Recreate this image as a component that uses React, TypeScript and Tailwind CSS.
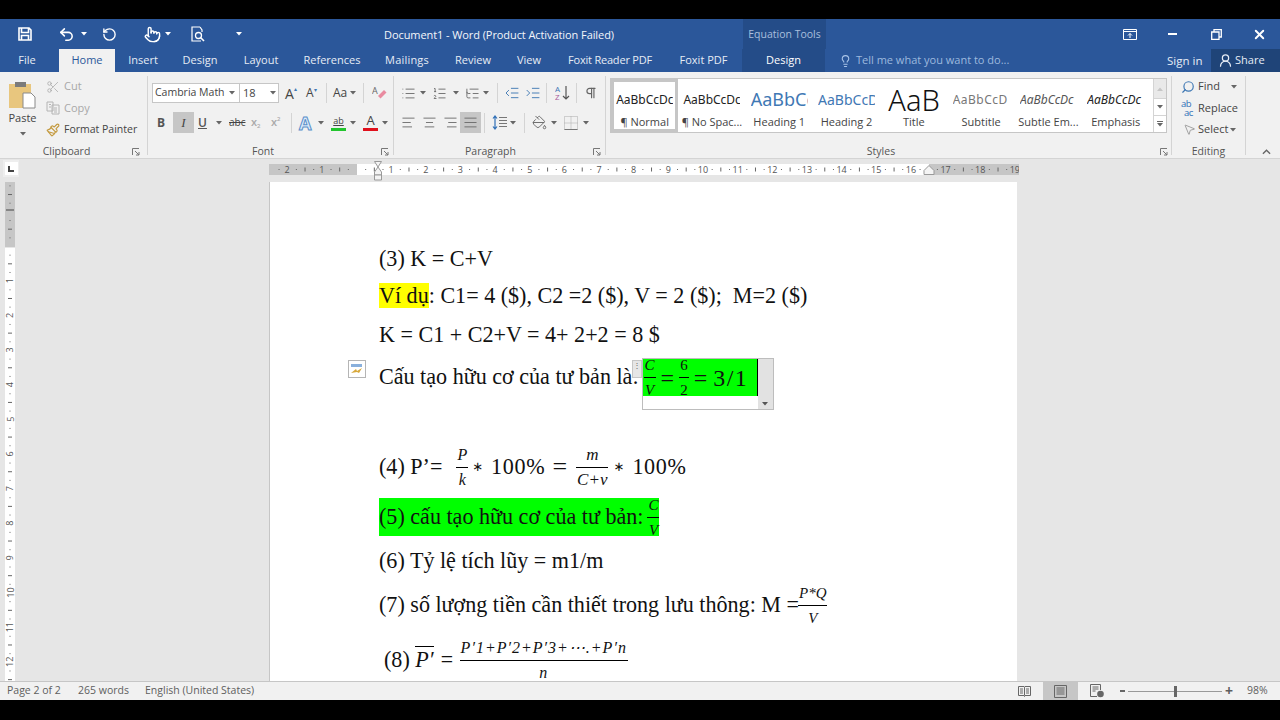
import {
  AlignCenter,
  AlignJustify,
  AlignLeft,
  AlignRight,
  IndentDecrease,
  IndentIncrease,
  Lightbulb,
  List,
  ListOrdered,
  ListTree,
  MousePointer2,
  Paintbrush,
  PaintBucket,
  Pilcrow,
  Pointer,
  RotateCw,
  Scissors,
  Search,
  Undo2,
  UserRound,
  X,
} from 'lucide-react';

const Caret = ({ className = '' }: { className?: string }) => (
  <svg viewBox="0 0 6 4" className={`w-[6px] h-[4px] shrink-0 ${className}`}>
    <path d="M0 0h6L3 3.5z" fill="currentColor" />
  </svg>
);

const Launcher = () => (
  <svg viewBox="0 0 8 8" className="w-[8px] h-[8px] text-[#777]">
    <path d="M.5 7V.5H7M3 3l4 4M4 7h3V4" fill="none" stroke="currentColor" />
  </svg>
);

const SaveIcon = () => (
  <svg viewBox="0 0 14 14" className="w-[14px] h-[14px] text-white">
    <path d="M1 1h10l2 2v10H1zM3.5 1.5v4h7v-4M3.5 13V8.5h7V13" fill="none" stroke="currentColor" strokeWidth="1.6" />
  </svg>
);

const PreviewIcon = () => (
  <svg viewBox="0 0 15 16" className="w-[15px] h-[16px] text-white">
    <path d="M10 1H2v14h9M10 1l2 3v2" fill="none" stroke="currentColor" strokeWidth="1.2" />
    <circle cx="8.5" cy="9.5" r="3" fill="none" stroke="currentColor" strokeWidth="1.3" />
    <path d="M10.5 11.5l3.5 3.5" stroke="currentColor" strokeWidth="1.6" />
  </svg>
);

const PasteIcon = () => (
  <svg viewBox="0 0 27 28" className="w-[27px] h-[28px]">
    <rect x="0" y="3" width="22" height="24" fill="#e8c67e" />
    <rect x="6" y="1" width="11" height="5" fill="#7b7b7b" />
    <path d="M14 12h8l4 4v11H14z" fill="#fff" stroke="#8a8a8a" />
  </svg>
);

const CopyIcon = () => (
  <svg viewBox="0 0 14 14" className="w-[14px] h-[14px] text-[#b4b4b4]">
    <path d="M1 1h6v9H1zM6 4h7v9H6zM3 3.5h2M3 6h2M8 7h3M8 9h3M8 11h3" fill="#f1f1f1" stroke="currentColor" />
  </svg>
);

const EraserIcon = () => (
  <svg viewBox="0 0 15 14" className="w-[15px] h-[14px]">
    <path d="M6 10l6-6 2.5 2.5-6 6z" fill="#e98ba0" />
    <text x="0" y="8" fontSize="9" fill="#666" fontFamily="Open Sans">A</text>
  </svg>
);

const ColorLetter = ({ bar, label }: { bar: string; label: string }) => (
  <span className="relative w-[15px] h-[17px] flex flex-col items-center">
    <span className={`leading-[13px] text-[#444] ${label === 'A' ? 'text-[13px]' : 'text-[9px] underline'}`}>{label}</span>
    <span className={`mt-auto w-[15px] h-[3px] ${bar}`} />
  </span>
);

const SortIcon = () => (
  <svg viewBox="0 0 16 16" className="w-[16px] h-[16px]">
    <text x="0" y="7" fontSize="8" fill="#3f74b5" fontFamily="Open Sans">A</text>
    <text x="0" y="15" fontSize="8" fill="#a85a9a" fontFamily="Open Sans">Z</text>
    <path d="M11 1v13M8 11l3 3 3-3" fill="none" stroke="#555" strokeWidth="1.2" />
  </svg>
);

const SpacingIcon = () => (
  <svg viewBox="0 0 15 15" className="w-[15px] h-[15px]">
    <path d="M3 1v13M1 3.500l2-2.500 2 2.500M1 11.500l2 2.500 2-2.500" fill="none" stroke="#2f6fb7" strokeWidth="1.2" />
    <path d="M7 2.500h8M7 5.500h8M7 8.500h8M7 11.500h8" stroke="#777" />
  </svg>
);

const BorderIcon = () => (
  <svg viewBox="0 0 14 14" className="w-[14px] h-[14px]">
    <path d="M.5.5h13v13H.5zM7 .5v13M.5 7h13" fill="none" stroke="#aaa" strokeDasharray="1 1" />
    <path d="M.5 13.500h13" stroke="#777" />
  </svg>
);

const ReplaceIcon = () => (
  <span className="w-[15px] h-[18px] flex flex-col text-[9.500px] leading-[9px] tracking-[-0.5px]">
    <span className="text-[#2f6fb7]">ab</span>
    <span className="text-[#2f6fb7] pl-[3px]">ac</span>
  </span>
);

const RestoreRibbon = () => (
  <svg viewBox="0 0 14 11" className="w-[14px] h-[11px] text-white">
    <path d="M.5.5h13v10H.5zM.5 2.500h13M7 9V4.500M5 6.500l2-2 2 2" fill="none" stroke="currentColor" />
  </svg>
);

const RestoreWin = () => (
  <svg viewBox="0 0 11 11" className="w-[11px] h-[11px] text-white">
    <path d="M3 2.500V.7h7.300V8H8.500M.7 3h7.300v7.300H.7z" fill="none" stroke="currentColor" strokeWidth="1.3" />
  </svg>
);

const ReadIcon = () => (
  <svg viewBox="0 0 13 13" className="w-[13px] h-[13px] text-[#666]">
    <path d="M.5 1.500h5.500l.5 1 .5-1h5.500v9H7l-.5 1-.5-1H.5zM6.500 2.500v8M2 4h3M2 6h3M2 8h3M8 4h3M8 6h3M8 8h3" fill="none" stroke="currentColor" />
  </svg>
);

const PrintIcon = () => (
  <svg viewBox="0 0 13 13" className="w-[13px] h-[13px] text-[#666]">
    <path d="M.5.5h12v12H.5zM2.500 3h8M2.500 5h8M2.500 7h8M2.500 9h8" fill="none" stroke="currentColor" />
  </svg>
);

const WebIcon = () => (
  <svg viewBox="0 0 14 14" className="w-[14px] h-[14px] text-[#666]">
    <path d="M7 12.500H.5V.5h10V6M2.500 3h6M2.500 5h6M2.500 7h3" fill="none" stroke="currentColor" />
    <circle cx="10.500" cy="10" r="3.300" fill="#666" />
  </svg>
);

const EquationHint = () => (
  <svg viewBox="0 0 18 18" className="w-[18px] h-[18px]">
    <rect x=".5" y=".5" width="17" height="17" fill="#fff" stroke="#b5b5b5" />
    <rect x="3" y="4" width="11" height="3" fill="#8ab0dc" />
    <path d="M3 13l5-4 1 2 5-3-3 5-2-1z" fill="#d8a83a" />
  </svg>
);

const styleItems = [
  { sample: 'AaBbCcDc', name: '¶ Normal', cls: 'text-[12px] text-[#222]' },
  { sample: 'AaBbCcDc', name: '¶ No Spac...', cls: 'text-[12px] text-[#222]' },
  { sample: 'AaBbCc', name: 'Heading 1', cls: 'text-[18px] text-[#3f78b4]' },
  { sample: 'AaBbCcD', name: 'Heading 2', cls: 'text-[14px] text-[#3f78b4]' },
  { sample: 'AaB', name: 'Title', cls: 'text-[29px] text-[#111] font-light' },
  { sample: 'AaBbCcD', name: 'Subtitle', cls: 'text-[12px] text-[#777] tracking-[0.5px]' },
  { sample: 'AaBbCcDc', name: 'Subtle Em...', cls: 'text-[12px] text-[#555] italic' },
  { sample: 'AaBbCcDc', name: 'Emphasis', cls: 'text-[12px] text-[#222] italic' },
];

const HRuler = () => {
  const nums = Array.from({ length: 19 }, (_, i) => i + 1);
  const ticks = Array.from({ length: 90 }, (_, i) => i - 12);
  return (
    <svg viewBox="0 0 750 11" className="w-[750px] h-[11px] ml-[250px] mt-[5px] shrink-0">
      <rect width="88" height="11" fill="#c6c6c6" />
      <rect x="88" width="572" height="11" fill="#fff" />
      <rect x="660" width="90" height="11" fill="#c6c6c6" />
      {ticks.map((t) => {
        const x = 87.5 + t * 8.6625;
        if (t % 4 === 0 || x < 2 || x > 748) return null;
        return t % 2 === 0 ? (
          <rect key={t} x={x} y="3.500" width="1" height="4" fill="#666" />
        ) : (
          <rect key={t} x={x} y="5" width="1" height="1" fill="#666" />
        );
      })}
      {nums.map((n) => (
        <text key={n} x={87.5 + n * 34.65} y="9" fontSize="9" fill="#555" textAnchor="middle" fontFamily="Open Sans">
          {n}
        </text>
      ))}
      {[1, 2].map((n) => (
        <text key={n} x={87.5 - n * 34.65} y="9" fontSize="9" fill="#555" textAnchor="middle" fontFamily="Open Sans">
          {n}
        </text>
      ))}
      <path d="M655 10.500v-4l5-5 5 5v4z" fill="#f4f4f4" stroke="#999" />
    </svg>
  );
};

const VRuler = () => {
  const nums = Array.from({ length: 12 }, (_, i) => i + 1);
  const ticks = Array.from({ length: 58 }, (_, i) => i - 7);
  return (
    <svg viewBox="0 0 10 499" className="w-[10px] h-[499px] ml-[5px] shrink-0">
      <rect width="10" height="65" fill="#c6c6c6" />
      <rect y="66" width="10" height="433" fill="#fff" />
      {ticks.map((t) => {
        const y = 64 + t * 8.6625;
        if (t % 4 === 0) return null;
        return t % 2 === 0 ? (
          <rect key={t} x="3" y={y} width="4" height="1" fill="#666" />
        ) : (
          <rect key={t} x="4.500" y={y} width="1" height="1" fill="#666" />
        );
      })}
      {nums.map((n) => (
        <text
          key={n}
          x="5"
          y={64 + n * 34.65}
          fontSize="9"
          fill="#555"
          textAnchor="middle"
          dominantBaseline="central"
          fontFamily="Open Sans"
          transform={`rotate(-90 5 ${64 + n * 34.65})`}
        >
          {n}
        </text>
      ))}
      <path d="M1 28h8" stroke="#444" />
    </svg>
  );
};

const Frac = ({ top, bottom, className = '' }: { top: string; bottom: string; className?: string }) => (
  <span className={`inline-flex flex-col items-center italic leading-[24px] ${className}`}>
    <span className="px-px">{top}</span>
    <span className="self-stretch h-px bg-black" />
    <span className="px-px">{bottom}</span>
  </span>
);

const MathStar = ({ className = '' }: { className?: string }) => (
  <span className={`font-['DejaVu_Sans'] text-[13px] ${className}`}>∗</span>
);

export default function App() {
  return (
    <div className="w-[1280px] h-[720px] bg-black flex flex-col overflow-hidden font-['Open_Sans',sans-serif] text-[11px]">
      <div className="h-[19px] shrink-0" />

      {/* title bar */}
      <div className="h-[30px] shrink-0 bg-[#2b579a] flex items-center text-white">
        <div className="ml-[18px] w-[40px]">
          <SaveIcon />
        </div>
        <Undo2 className="w-[17px] h-[17px]" strokeWidth={2.2} />
        <Caret className="ml-[6px]" />
        <RotateCw className="ml-[15px] w-[15px] h-[15px] -scale-x-100" strokeWidth={2.2} />
        <Pointer className="ml-[27px] w-[17px] h-[17px]" strokeWidth={2} />
        <Caret className="ml-[4px]" />
        <div className="ml-[19px]">
          <PreviewIcon />
        </div>
        <Caret className="ml-[31px]" />
        <span className="ml-[142px] w-[359px] pt-[2px] text-[11px] text-[#f3f6fb] tracking-[-0.08px]">
          Document1 - Word (Product Activation Failed)
        </span>
        <div className="w-[83px] h-full pt-[2px] bg-[#244c88] flex items-center justify-center text-[#a9bfdd] text-[10.500px]">
          Equation Tools
        </div>
        <div className="ml-[297px]">
          <RestoreRibbon />
        </div>
        <span className="ml-[31px] w-[9px] h-[2px] bg-white" />
        <div className="ml-[34px]">
          <RestoreWin />
        </div>
        <X className="ml-[30px] w-[15px] h-[15px]" strokeWidth={3} />
      </div>

      {/* tabs */}
      <div className="h-[23px] shrink-0 bg-[#2b579a] flex items-center text-[#e6ecf5] text-[11px]">
        <span className="w-[59px] pr-[5px] text-center">File</span>
        <span className="w-[56px] h-full bg-[#f1f1f1] text-[#2b579a] flex items-center justify-center">Home</span>
        <span className="w-[56px] text-center">Insert</span>
        <span className="w-[58px] text-center">Design</span>
        <span className="w-[64px] text-center">Layout</span>
        <span className="w-[78px] text-center">References</span>
        <span className="w-[72px] text-center tracking-[0.2px]">Mailings</span>
        <span className="w-[60px] text-center">Review</span>
        <span className="w-[52px] text-center">View</span>
        <span className="w-[110px] text-center tracking-[-0.2px]">Foxit Reader PDF</span>
        <span className="w-[77px] text-center">Foxit PDF</span>
        <span className="w-[83px] h-full bg-[#244c88] flex items-center justify-center text-white">Design</span>
        <Lightbulb className="ml-[14px] w-[13px] h-[14px] text-[#a9c4e8] shrink-0" />
        <span className="ml-[4px] w-[311px] text-[#9db9de] text-[11px] whitespace-nowrap">Tell me what you want to do...</span>
        <span className="w-[44px] text-[11.500px]">Sign in</span>
        <div className="w-[69px] h-full bg-[#1f4478] flex items-center pl-[7px]">
          <UserRound className="w-[15px] h-[15px]" strokeWidth={2} />
          <span className="ml-[2px]">Share</span>
        </div>
      </div>

      {/* ribbon */}
      <div className="h-[87px] shrink-0 bg-[#f1f1f1] border-b border-[#d4d4d4] flex pt-[4px] text-[#444]">
        {/* clipboard */}
        <div className="w-[148px] h-[79px] shrink-0 border-r border-[#d4d4d4] flex flex-col">
          <div className="flex">
            <div className="w-[46px] flex flex-col items-center pt-[5px] pr-[1px]">
              <PasteIcon />
              <span className="mt-[1px] leading-[16px]">Paste</span>
              <Caret className="mt-[6px] text-[#666]" />
            </div>
            <div className="flex flex-col">
              <div className="h-[21px] flex items-center text-[#a8a8a8]">
                <Scissors className="w-[14px] h-[14px]" strokeWidth={1.3} />
                <span className="ml-[4px]">Cut</span>
              </div>
              <div className="h-[22px] flex items-center text-[#a8a8a8]">
                <CopyIcon />
                <span className="ml-[4px]">Copy</span>
              </div>
              <div className="h-[21px] flex items-center">
                <Paintbrush className="w-[14px] h-[14px] text-[#c49a3f]" strokeWidth={2} />
                <span className="ml-[4px] text-[10.500px]">Format Painter</span>
              </div>
            </div>
          </div>
          <div className="mt-auto h-[14px] -mb-[4px] flex items-center text-[#555] text-[10.500px]">
            <span className="flex-1 text-center pl-[1px]">Clipboard</span>
            <span className="w-[15px]"><Launcher /></span>
          </div>
        </div>

        {/* font */}
        <div className="w-[246px] h-[79px] shrink-0 border-r border-[#d4d4d4] flex flex-col pl-[4px]">
          <div className="mt-[7px] h-[20px] flex items-center">
            <div className="w-[88px] h-[20px] bg-white border border-[#c6c6c6] flex items-center pl-[2px] text-[10.500px]">
              <span className="w-[74px]">Cambria Math</span>
              <Caret className="text-[#666]" />
            </div>
            <div className="w-[40px] h-[20px] -ml-px bg-white border border-[#c6c6c6] flex items-center pl-[3px] text-[11px]">
              <span className="w-[27px]">18</span>
              <Caret className="text-[#666]" />
            </div>
            <span className="ml-[6px] text-[14px] w-[21px] flex"><span>A</span><span className="text-[#3f78b4] text-[6px] leading-[12px]">▴</span></span>
            <span className="text-[12px] w-[20px] flex"><span>A</span><span className="text-[#3f78b4] text-[6px] leading-[12px]">▾</span></span>
            <span className="w-px h-[20px] bg-[#d4d4d4]" />
            <span className="ml-[6px] text-[12px]">Aa</span>
            <Caret className="ml-[3px] text-[#666]" />
            <span className="ml-[7px] w-px h-[20px] bg-[#d4d4d4]" />
            <div className="ml-[8px]">
              <EraserIcon />
            </div>
          </div>
          <div className="mt-[9px] h-[21px] flex items-center">
            <span className="ml-[5px] w-[16px] font-bold text-[12px] text-[#555]">B</span>
            <span className="w-[21px] h-[21px] bg-[#c6c6c6] flex items-center justify-center italic font-['Liberation_Serif'] text-[13px]">I</span>
            <span className="ml-[4px] w-[18px] underline text-[12px] font-semibold text-[#555]">U</span>
            <Caret className="text-[#666]" />
            <span className="ml-[7px] w-[22px] line-through text-[10px]">abc</span>
            <span className="text-[#aaa] font-semibold text-[11px] w-[20px] flex items-end"><span>x</span><span className="text-[6px] leading-[10px]">2</span></span>
            <span className="text-[#aaa] font-semibold text-[11px] w-[20px] flex items-start"><span>x</span><span className="text-[6px] leading-[10px]">2</span></span>
            <span className="w-px h-[20px] bg-[#d4d4d4]" />
            <span className="ml-[7px] w-[15px] text-[18px] leading-[18px] text-[#dcebfa] font-bold [-webkit-text-stroke:1px_#5a8fca]">A</span>
            <Caret className="ml-[4px] text-[#666]" />
            <div className="ml-[7px]"><ColorLetter bar="bg-[#22c52e]" label="ab" /></div>
            <Caret className="ml-[4px] text-[#666]" />
            <div className="ml-[7px]"><ColorLetter bar="bg-[#e0101c]" label="A" /></div>
            <Caret className="ml-[4px] text-[#666]" />
          </div>
          <div className="mt-auto h-[14px] -mb-[4px] flex items-center text-[#555] text-[10.500px]">
            <span className="flex-1 text-center pr-[7px]">Font</span>
            <span className="w-[12px]"><Launcher /></span>
          </div>
        </div>

        {/* paragraph */}
        <div className="w-[212px] h-[79px] shrink-0 border-r border-[#d4d4d4] flex flex-col pl-[7px]">
          <div className="mt-[7px] h-[20px] flex items-center text-[#666]">
            <List className="w-[15px] h-[15px]" strokeWidth={1.4} />
            <Caret className="ml-[4px]" />
            <ListOrdered className="ml-[6px] w-[15px] h-[15px]" strokeWidth={1.4} />
            <Caret className="ml-[6px]" />
            <ListTree className="ml-[6px] w-[15px] h-[15px]" strokeWidth={1.4} />
            <Caret className="ml-[3px]" />
            <span className="ml-[8px] w-px h-[20px] bg-[#d4d4d4]" />
            <IndentDecrease className="ml-[6px] w-[16px] h-[16px] text-[#3f78b4]" strokeWidth={1.4} />
            <IndentIncrease className="ml-[5px] w-[16px] h-[16px] text-[#3f78b4]" strokeWidth={1.4} />
            <span className="ml-[5px] w-px h-[20px] bg-[#d4d4d4]" />
            <div className="ml-[8px]"><SortIcon /></div>
            <span className="ml-[5px] w-px h-[20px] bg-[#d4d4d4]" />
            <Pilcrow className="ml-[7px] w-[14px] h-[14px]" strokeWidth={2} />
          </div>
          <div className="mt-[9px] h-[21px] flex items-center text-[#666]">
            <AlignLeft className="w-[15px] h-[15px]" strokeWidth={1.4} />
            <AlignCenter className="ml-[6px] w-[15px] h-[15px]" strokeWidth={1.4} />
            <AlignRight className="ml-[6px] w-[15px] h-[15px]" strokeWidth={1.4} />
            <span className="ml-[2px] w-[21px] h-[21px] bg-[#c6c6c6] flex items-center justify-center">
              <AlignJustify className="w-[15px] h-[15px]" strokeWidth={1.4} />
            </span>
            <span className="ml-[3px] w-px h-[20px] bg-[#d4d4d4]" />
            <div className="ml-[7px]"><SpacingIcon /></div>
            <Caret className="ml-[3px]" />
            <span className="ml-[8px] w-px h-[20px] bg-[#d4d4d4]" />
            <PaintBucket className="ml-[7px] w-[15px] h-[15px]" strokeWidth={1.5} />
            <Caret className="ml-[4px]" />
            <div className="ml-[7px]"><BorderIcon /></div>
            <Caret className="ml-[5px]" />
          </div>
          <div className="mt-auto h-[14px] -mb-[4px] flex items-center text-[#555] text-[10.500px]">
            <span className="flex-1 text-center pr-[13px]">Paragraph</span>
            <span className="w-[12px]"><Launcher /></span>
          </div>
        </div>

        {/* styles */}
        <div className="w-[566px] h-[79px] shrink-0 border-r border-[#d4d4d4] flex flex-col pl-[4px]">
          <div className="mt-[2px] w-[557px] h-[55px] bg-white border border-[#c6c6c6] flex">
            {styleItems.map((item, i) => (
              <div
                key={item.name}
                className={`w-[67.300px] h-full shrink-0 flex flex-col items-center overflow-hidden font-['Noto_Sans'] ${
                  i === 0 ? 'border-[3px] border-[#c6c6c6] bg-white' : 'pt-[3px]'
                }`}
              >
                <div className={`h-[30px] shrink-0 pt-[5px] w-[57px] flex items-center whitespace-nowrap overflow-hidden ${item.cls}`}>
                  <span className={i === 4 ? 'pl-[3px]' : ''}>{item.sample}</span>
                </div>
                <div className="shrink-0 text-[11px] leading-[20px] whitespace-nowrap font-['Open_Sans'] text-[#444]">{item.name}</div>
              </div>
            ))}
            <div className="ml-auto w-[13px] h-full border-l border-[#d4d4d4] flex flex-col text-[#666]">
              <div className="h-[20px] bg-[#e9e9e9] border-b border-[#d4d4d4] flex items-center justify-center text-[#c6c6c6]">
                <Caret className="rotate-180" />
              </div>
              <div className="h-[17px] border-b border-[#d4d4d4] flex items-center justify-center">
                <Caret />
              </div>
              <div className="flex-1 flex flex-col items-center justify-center gap-px">
                <span className="w-[6px] h-px bg-[#666]" />
                <Caret />
              </div>
            </div>
          </div>
          <div className="mt-auto h-[14px] -mb-[4px] flex items-center text-[#555] text-[10.500px]">
            <span className="flex-1 text-center pr-[8px]">Styles</span>
            <span className="w-[11px]"><Launcher /></span>
          </div>
        </div>

        {/* editing */}
        <div className="w-[74px] h-[79px] shrink-0 border-r border-[#d4d4d4] flex flex-col pl-[9px]">
          <div className="h-[21px] flex items-center">
            <Search className="w-[14px] h-[14px] text-[#3f78b4] -scale-x-100" strokeWidth={2} />
            <span className="ml-[3px] w-[33px]">Find</span>
            <Caret className="text-[#666]" />
          </div>
          <div className="h-[22px] flex items-center">
            <ReplaceIcon />
            <span className="ml-[2px]">Replace</span>
          </div>
          <div className="h-[21px] flex items-center">
            <MousePointer2 className="ml-[2px] w-[13px] h-[15px] text-[#777]" strokeWidth={1.2} />
            <span className="ml-[2px]">Select</span>
            <Caret className="ml-[2px] text-[#666]" />
          </div>
          <div className="mt-auto h-[14px] -mb-[4px] -ml-[9px] flex items-center justify-center text-[#555] text-[10.500px]">
            Editing
          </div>
        </div>

        <div className="ml-[16px] h-[79px] flex items-end">
          <svg viewBox="0 0 10 6" className="w-[9px] h-[6px] text-[#666]">
            <path d="M1 5l4-4 4 4" fill="none" stroke="currentColor" strokeWidth="1.500" />
          </svg>
        </div>
      </div>

      {/* ruler row */}
      <div className="h-[23px] shrink-0 bg-[#e6e6e6] flex items-start relative">
        <div className="mt-[1px] ml-[3px] w-[16px] h-[17px] bg-[#eeeeee] flex items-center justify-center">
          <span className="w-[13px] h-[13px] bg-white flex items-center justify-center">
            <span className="w-[6px] h-[6px] border-l-2 border-b-2 border-[#444]" />
          </span>
        </div>
        <HRuler />
        <svg viewBox="0 0 8 20" className="absolute left-[374px] top-[2px] w-[8px] h-[20px]">
          <path d="M.5.5h7L4 6l3.500 5v3h-7v-3L4 6z" fill="#f4f4f4" stroke="#999" />
          <path d="M.5 14h7v5h-7z" fill="#f4f4f4" stroke="#999" />
        </svg>
      </div>

      {/* document */}
      <div className="h-[499px] shrink-0 bg-[#e6e6e6] flex overflow-hidden">
        <VRuler />
        <div className="ml-[254px] w-[748px] h-[499px] bg-white border-l border-[#c6c6c6] pl-[109px] pt-[59px] overflow-hidden font-['Liberation_Serif',serif] text-[22.100px] text-[#111] whitespace-pre">
          <div className="h-[36px] leading-[36px]">(3) K = C+V</div>
          <div className="mt-px h-[36px] leading-[36px]">
            <span className="bg-[#ffff00]">Ví dụ</span>: C1= 4 ($), C2 =2 ($), V = 2 ($);  M=2 ($)
          </div>
          <div className="mt-[3px] h-[36px] leading-[36px]">K = C1 + C2+V = 4+ 2+2 = 8 $</div>
          <div className="relative mt-[5px] h-[52px] flex items-start">
            <div className="absolute -left-[31px] top-[2px]">
              <EquationHint />
            </div>
            <span className="leading-[38px]">Cấu tạo hữu cơ của tư bản là:</span>
            <div className="ml-[-7px] flex items-start">
              <div className="w-[10px] h-[18px] mt-[2px] bg-[#e6e6e6] border border-[#c6c6c6] text-[8px] leading-[5px] text-center text-[#666] pt-[2px]">⋮</div>
              <div className="w-[132px] h-[52px] bg-white border border-[#bdbdbd] flex">
                <div className="w-[115px] h-[37px] bg-[#00ff00] flex items-center pl-px border-r border-black">
                  <Frac top="C" bottom="V" className="text-[15px] leading-[18px]" />
                  <span className="ml-[5px] text-[24px] leading-none">=</span>
                  <Frac top="6" bottom="2" className="not-italic text-[15px] leading-[18px] ml-[5px]" />
                  <span className="ml-[5px] text-[24px] leading-none">=</span>
                  <span className="ml-[6px] text-[24px] leading-none tracking-[1.5px]">3/1</span>
                </div>
                <div className="ml-auto w-[15px] h-full bg-[#e2e2e2] flex items-end justify-center pb-[3px] text-[#555]">
                  <Caret />
                </div>
              </div>
            </div>
          </div>
          <div className="mt-[38px] h-[38px] flex items-center">
            <span>(4) P’=</span>
            <Frac top="P" bottom="k" className="ml-[14px] text-[16px]" />
            <MathStar className="ml-[4px]" />
            <span className="ml-[8px] tracking-[0.7px]">100%</span>
            <span className="ml-[7px] text-[26px] leading-none">=</span>
            <Frac top="m" bottom="C+v" className="ml-[9px] text-[17px]" />
            <MathStar className="ml-[5px]" />
            <span className="ml-[8px] tracking-[0.7px]">100%</span>
          </div>
          <div className="mt-[12px] h-[38px] w-[280px] bg-[#00ff00] flex items-center">
            <span>(5) cấu tạo hữu cơ của tư bản:</span>
            <Frac top="C" bottom="V" className="ml-[4px] text-[15px]" />
          </div>
          <div className="mt-[7px] h-[36px] leading-[36px]">(6) Tỷ lệ tích lũy = m1/m</div>
          <div className="mt-[8px] h-[36px] flex items-center">
            <span>(7) số lượng tiền cần thiết trong lưu thông: M =</span>
            <Frac top="P*Q" bottom="V" className="text-[15px] -ml-px" />
          </div>
          <div className="mt-[17px] ml-[5px] h-[40px] flex items-center">
            <span>(8) </span>
            <span className="italic"><span className="border-t border-black">P′</span> = </span>
            <Frac top="P′1+P′2+P′3+⋯.+P′n" bottom="n" className="text-[16px] tracking-[1px]" />
          </div>
        </div>
      </div>

      {/* status bar */}
      <div className="h-[19px] shrink-0 bg-[#f1f1f1] border-t border-[#c6c6c6] flex items-center text-[#5e5e5e] text-[10.500px]">
        <span className="ml-[7px] w-[71px]">Page 2 of 2</span>
        <span className="w-[67px]">265 words</span>
        <span className="w-[125px]">English (United States)</span>
        <div className="ml-[748px]"><ReadIcon /></div>
        <span className="ml-[12px] w-[35px] h-full bg-[#c6c6c6] flex items-center justify-center"><PrintIcon /></span>
        <div className="ml-[12px]"><WebIcon /></div>
        <span className="ml-[16px] w-[5px] h-[2px] bg-[#666]" />
        <div className="ml-[3px] w-[94px] h-px bg-[#999] flex items-center justify-center">
          <span className="w-[3px] h-[11px] bg-[#666]" />
        </div>
        <span className="w-[14px] text-center text-[14px] font-bold leading-none">+</span>
        <span className="ml-[11px]">98%</span>
      </div>
      <div className="h-[20px] shrink-0" />
    </div>
  );
}
